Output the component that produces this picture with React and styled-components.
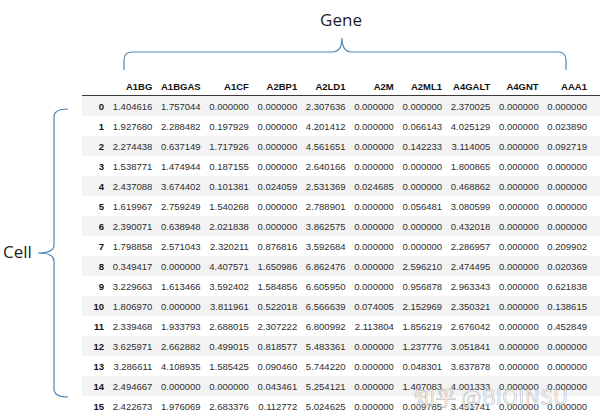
import React from "react";
import styled, { createGlobalStyle } from "styled-components";

const Global = createGlobalStyle`
  html, body { margin: 0; padding: 0; background: #fff; }
  body { width: 600px; height: 420px; overflow: hidden; }
`;

const Page = styled.div`
  position: relative;
  width: 600px;
  height: 420px;
  overflow: hidden;
  display: grid;
  grid-template-columns: 82px 518px;
  grid-template-rows: 78px 342px;
  background: #fff;
`;

const Corner = styled.div``;

const GeneHeader = styled.div`
  display: flex;
  flex-direction: column;
  align-items: center;
`;

const AxisLabel = styled.div`
  font-family: "Open Sans", "Noto Sans", sans-serif;
  font-size: 17px;
  line-height: 20px;
  color: #1e1e1e;
  margin-top: ${(p) => p.$top || 0}px;
  padding-left: ${(p) => p.$left || 0}px;
  width: ${(p) => (p.$width ? p.$width + "px" : "auto")};
`;

const BraceSvg = styled.svg`
  display: block;
  flex: none;
  margin-top: ${(p) => p.$top || 0}px;
`;

const CellSide = styled.div`
  display: flex;
  align-items: flex-start;
  padding-top: 30px;
`;

const Table = styled.div`
  display: flex;
  flex-direction: column;
  font-family: "Liberation Sans", Arial, sans-serif;
  font-size: 9.5px;
`;

const Row = styled.div`
  display: grid;
  grid-template-columns: 22px repeat(10, 48.3px) 1fr;
  align-items: center;
  height: ${(p) => (p.$head ? 17 : 20)}px;
  background: ${(p) => (p.$striped ? "#f3f3f3" : "#fff")};
  border-bottom: ${(p) => (p.$head ? "1px solid #3a3a3a" : "none")};
`;

const Cell = styled.span`
  text-align: right;
  white-space: nowrap;
  font-weight: ${(p) => (p.$bold ? 700 : 400)};
  color: ${(p) => (p.$bold ? "#111" : "#2e2e2e")};
`;

const Watermark = styled.div`
  position: absolute;
  left: 414px;
  top: 382px;
  font-family: "Noto Sans CJK SC", "Noto Sans", sans-serif;
  font-size: 21px;
  line-height: 28px;
  letter-spacing: 0.3px;
  color: rgba(255, 255, 255, 0.6);
  -webkit-text-stroke: 0.7px rgba(110, 110, 110, 0.45);
  white-space: nowrap;
`;

const cols = ["A1BG", "A1BGAS", "A1CF", "A2BP1", "A2LD1", "A2M", "A2ML1", "A4GALT", "A4GNT", "AAA1"];

const data = [
  "1.404616 1.757044 0.000000 0.000000 2.307636 0.000000 0.000000 2.370025 0.000000 0.000000",
  "1.927680 2.288482 0.197929 0.000000 4.201412 0.000000 0.066143 4.025129 0.000000 0.023890",
  "2.274438 0.637149 1.717926 0.000000 4.561651 0.000000 0.142233 3.114005 0.000000 0.092719",
  "1.538771 1.474944 0.187155 0.000000 2.640166 0.000000 0.000000 1.800865 0.000000 0.000000",
  "2.437088 3.674402 0.101381 0.024059 2.531369 0.024685 0.000000 0.468862 0.000000 0.000000",
  "1.619967 2.759249 1.540268 0.000000 2.788901 0.000000 0.056481 3.080599 0.000000 0.000000",
  "2.390071 0.638948 2.021838 0.000000 3.862575 0.000000 0.000000 0.432018 0.000000 0.000000",
  "1.798858 2.571043 2.320211 0.876816 3.592684 0.000000 0.000000 2.286957 0.000000 0.209902",
  "0.349417 0.000000 4.407571 1.650986 6.862476 0.000000 2.596210 2.474495 0.000000 0.020369",
  "3.229663 1.613466 3.592402 1.584856 6.605950 0.000000 0.956878 2.963343 0.000000 0.621838",
  "1.806970 0.000000 3.811961 0.522018 6.566639 0.074005 2.152969 2.350321 0.000000 0.138615",
  "2.339468 1.933793 2.688015 2.307222 6.800992 2.113804 1.856219 2.676042 0.000000 0.452849",
  "3.625971 2.662882 0.499015 0.818577 5.483361 0.000000 1.237776 3.051841 0.000000 0.000000",
  "3.286611 4.108935 1.585425 0.090460 5.744220 0.000000 0.048301 3.837878 0.000000 0.000000",
  "2.494667 0.000000 0.000000 0.043461 5.254121 0.000000 1.407083 4.001333 0.000000 0.000000",
  "2.422673 1.976069 2.683376 0.112772 5.024625 0.000000 0.009785 3.451741 0.000000 0.000000",
].map((r) => r.split(" "));

const BRACE = "#4f86b3";

export default function App() {
  return (
    <>
      <Global />
      <Page>
        <Corner />
        <GeneHeader>
          <AxisLabel $top={10}>Gene</AxisLabel>
          <BraceSvg $top={6} width="518" height="36" viewBox="0 0 518 36">
            <path
              d="M42,34 L42,24 Q42,16 50,16 L250,16 Q260,16 260,2 Q260,16 270,16 L476,16 Q484,16 484,24 L484,34"
              fill="none"
              stroke={BRACE}
              strokeWidth="1.2"
            />
          </BraceSvg>
        </GeneHeader>
        <CellSide>
          <AxisLabel $top={134} $left={3} $width={33}>Cell</AxisLabel>
          <BraceSvg width="34" height="292" viewBox="0 0 34 292">
            <path
              d="M32,1 Q18,1 18,9 L18,137 Q18,145 2,145 Q18,145 18,153 L18,281 Q18,289 32,289"
              fill="none"
              stroke={BRACE}
              strokeWidth="1.2"
            />
          </BraceSvg>
        </CellSide>
        <Table>
          <Row $head>
            <Cell $bold />
            {cols.map((c) => (
              <Cell key={c} $bold>{c}</Cell>
            ))}
            <span />
          </Row>
          {data.map((vals, i) => (
            <Row key={i} $striped={i % 2 === 0}>
              <Cell $bold>{i}</Cell>
              {vals.map((v, j) => (
                <Cell key={j}>{v}</Cell>
              ))}
              <span />
            </Row>
          ))}
        </Table>
        <Watermark>知乎 @BIOINSU</Watermark>
      </Page>
    </>
  );
}
